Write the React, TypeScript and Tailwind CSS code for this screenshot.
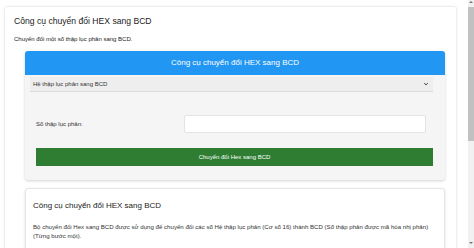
import React from 'react'

const App = () => {
  return (
    <div className="flex h-[248px] w-[474px] overflow-hidden bg-white font-['Liberation_Sans',Arial,sans-serif] text-[#222]">
      <div className="flex-1 pl-[5px] pr-[12px] pt-[7px]">
        {/* Page card */}
        <div className="h-[260px] rounded-[2px] bg-white px-[9px] pt-[7px] shadow-[0_0_3px_rgba(0,0,0,0.18)]">
          <h1 className="text-[8.6px] leading-[14px] text-[#222]">Công cụ chuyển đổi HEX sang BCD</h1>
          <p className="mt-[7px] text-[6px] leading-[9px] text-[#222]">Chuyển đổi một số thập lục phân sang BCD.</p>

          <div className="ml-[11px] mr-[2px] mt-[7px]">
            {/* Converter card */}
            <div className="rounded-[3px] bg-[#f5f5f5] shadow-[0_1px_3px_rgba(0,0,0,0.18)]">
              <div className="flex h-[24px] items-center justify-center rounded-t-[3px] bg-[#2196f3] text-[8px] text-white">
                Công cụ chuyển đổi HEX sang BCD
              </div>
              <div className="pb-[14px] pl-[5px] pr-[12px] pt-[2px]">
                <div className="flex h-[15px] items-center justify-between border-b border-[#dcdcdc] bg-[#eeeeee] pl-[3px] pr-[4px] text-[6px] text-[#333]">
                  <span>Hệ thập lục phân sang BCD</span>
                  <svg width="6" height="6" viewBox="0 0 10 10">
                    <path d="M2 3.5 L5 6.5 L8 3.5" fill="none" stroke="#333" strokeWidth="1.6" />
                  </svg>
                </div>
                <div className="mt-[23px] flex items-center pl-[6px] pr-[7px]">
                  <span className="w-[148px] text-[6px] text-[#333]">Số thập lục phân:</span>
                  <div className="h-[18px] flex-1 rounded-[2px] border border-[#e3e3e3] bg-white" />
                </div>
                <button className="ml-[6px] mt-[15px] flex h-[18px] w-[397px] items-center justify-center bg-[#2e7d32] text-[6px] text-white">
                  Chuyển đổi Hex sang BCD
                </button>
              </div>
            </div>

            {/* Info card */}
            <div className="mt-[8px] rounded-[3px] border border-[#e6e6e6] bg-white px-[7px] pt-[10px] shadow-[0_1px_3px_rgba(0,0,0,0.12)]">
              <h2 className="text-[8px] leading-[14px] text-[#222]">Công cụ chuyển đổi HEX sang BCD</h2>
              <p className="mt-[9px] text-[6.1px] leading-[9px] text-[#333]">
                Bộ chuyển đổi Hex sang BCD được sử dụng để chuyển đổi các số Hệ thập lục phân (Cơ số 16) thành BCD (Số thập phân được mã hóa nhị phân) (Từng bước một).
              </p>
              <p className="mt-[6px] text-[6.1px] leading-[9px] text-[#333]">Để chuyển đổi một số hex sang BCD:</p>
            </div>
          </div>
        </div>
      </div>

      {/* Scrollbar */}
      <div className="flex w-[6px] flex-col items-center bg-[#f1f1f1]">
        <div className="mt-[1px] h-0 w-0 border-x-[2px] border-b-[2px] border-x-transparent border-b-[#777]" />
        <div className="mt-[4px] h-[134px] w-[6px] bg-[#c1c1c1]" />
        <div className="flex-1" />
        <div className="mb-[4px] h-0 w-0 border-x-[2px] border-t-[2px] border-x-transparent border-t-[#777]" />
      </div>
    </div>
  )
}

export default App
